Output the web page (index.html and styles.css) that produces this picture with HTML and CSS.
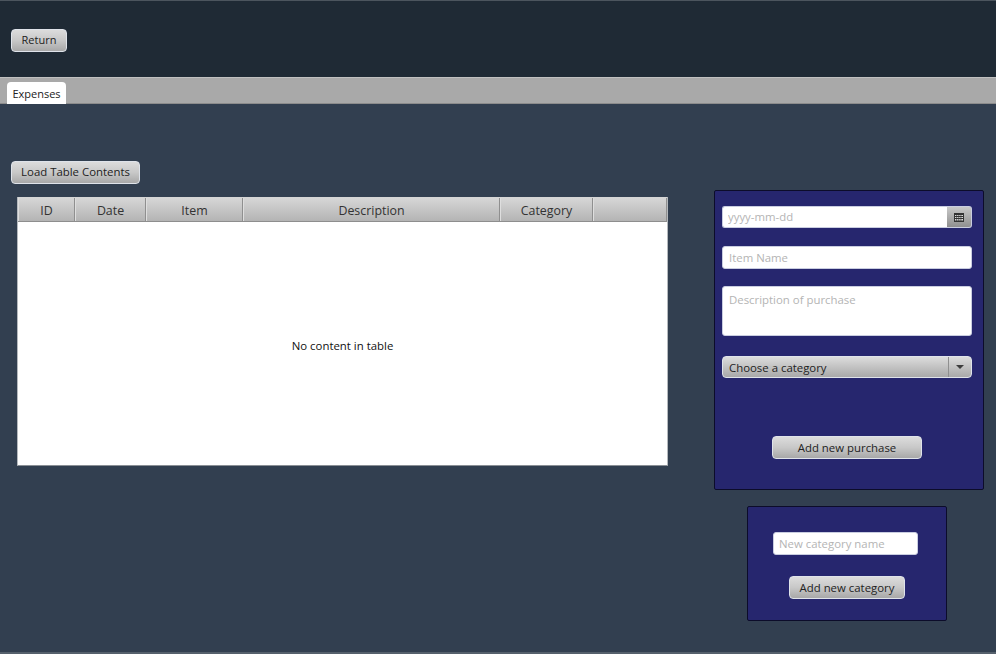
FILE: index.html
```html
<!DOCTYPE html>
<html lang="en">
<head>
    <meta charset="UTF-8">
    <title>Expenses</title>
    <link rel="stylesheet" href="styles.css">
</head>
<body>
    <div class="topbar">
        <button class="btn return-btn">Return</button>
    </div>
    <div class="tabbar">
        <div class="tab">Expenses</div>
    </div>
    <div class="content">
        <div class="left">
            <button class="btn load-btn">Load Table Contents</button>
            <div class="table">
                <div class="thead">
                    <div class="th col-id">ID</div>
                    <div class="th col-date">Date</div>
                    <div class="th col-item">Item</div>
                    <div class="th col-desc">Description</div>
                    <div class="th col-cat">Category</div>
                    <div class="th col-rest"></div>
                </div>
                <div class="tbody">No content in table</div>
            </div>
        </div>
        <div class="right">
            <div class="panel purchase-panel">
                <div class="date-field">
                    <input class="field date-input" type="text" placeholder="yyyy-mm-dd">
                    <div class="date-btn">
                        <svg width="10" height="9" viewBox="0 0 10 9">
                            <rect width="10" height="9" fill="#333"></rect>
                            <path d="M1 2h1.4v1H1zM3.1 2h1.4v1H3.1zM5.2 2h1.4v1H5.2zM7.3 2h1.7v1H7.3zM1 4h1.4v1H1zM3.1 4h1.4v1H3.1zM5.2 4h1.4v1H5.2zM7.3 4h1.7v1H7.3zM1 6h1.4v1.5H1zM3.1 6h1.4v1.5H3.1zM5.2 6h1.4v1.5H5.2zM7.3 6h1.7v1.5H7.3z" fill="#ddd"></path>
                        </svg>
                    </div>
                </div>
                <input class="field name-input" type="text" placeholder="Item Name">
                <textarea class="field desc-input" placeholder="Description of purchase"></textarea>
                <div class="combo">
                    <span class="combo-label">Choose a category</span>
                    <span class="combo-arrow"></span>
                </div>
                <button class="btn add-purchase-btn">Add new purchase</button>
            </div>
            <div class="panel category-panel">
                <input class="field category-input" type="text" placeholder="New category name">
                <button class="btn add-category-btn">Add new category</button>
            </div>
        </div>
    </div>
</body>
</html>
```

FILE: styles.css
```css
* {
    box-sizing: border-box;
}
html, body {
    margin: 0;
    padding: 0;
}
body {
    width: 996px;
    height: 654px;
    overflow: hidden;
    display: flex;
    flex-direction: column;
    font-family: "Open Sans", "Noto Sans", sans-serif;
    font-size: 11.4px;
    color: #222;
    background: #323f50;
    border-bottom: 2px solid #55606c;
}
.topbar {
    height: 77px;
    padding: 28px 0 0 11px;
    background: #1f2a35;
    border-top: 1px solid #4c555e;
}
.tabbar {
    height: 27px;
    padding: 4px 0 0 7px;
    background: #a9a9a9;
    border-top: 1px solid #c0c0c0;
    border-bottom: 1px solid #8c8c8c;
}
.tab {
    width: 59px;
    height: 22px;
    padding-top: 4px;
    font-size: 11px;
    text-align: center;
    background: #fff;
    border-radius: 4px 4px 0 0;
}
.btn {
    display: block;
    height: 23px;
    padding: 0;
    font-family: inherit;
    font-size: 11.4px;
    color: #222;
    background: linear-gradient(#dcdcdc 0%, #c8c8c8 50%, #a8a8a8 100%);
    border: 1px solid #dfe3ea;
    border-radius: 4px;
}
.return-btn {
    width: 56px;
    padding-bottom: 2px;
    font-size: 11px;
}
.content {
    flex: 1;
    display: flex;
    justify-content: space-between;
}
.left {
    padding: 57px 0 0 11px;
}
.load-btn {
    width: 129px;
    padding-bottom: 2px;
}
.table {
    width: 651px;
    height: 269px;
    margin: 13px 0 0 6px;
    display: flex;
    flex-direction: column;
    background: #fff;
    border-right: 1px solid #b5b9bd;
    border-bottom: 1px solid #8a8f95;
    border-left: 1px solid #b5b9bd;
}
.thead {
    height: 25px;
    display: flex;
    border-top: 1px solid #d5d5d5;
    border-bottom: 1px solid #8e8e8e;
    background: linear-gradient(#d6d6d6, #b4b4b4);
}
.th {
    font-size: 12.4px;
    line-height: 25px;
    text-align: center;
    color: #333;
    border-left: 1px solid #dedede;
    border-right: 1px solid #8f8f8f;
}
.col-id { width: 57px; }
.col-date { width: 71px; }
.col-item { width: 97px; }
.col-desc { width: 257px; }
.col-cat { width: 93px; }
.col-rest { flex: 1; }
.tbody {
    flex: 1;
    display: flex;
    align-items: center;
    justify-content: center;
    padding-top: 4px;
    color: #111;
}
.right {
    width: 282px;
    padding: 86px 12px 0 0;
    display: flex;
    flex-direction: column;
    align-items: flex-end;
}
.panel {
    background: #26266e;
    border: 1px solid #0c0c2a;
    border-radius: 2px;
}
.purchase-panel {
    width: 270px;
    height: 300px;
    padding: 15px 12px 0 7px;
}
.field {
    display: block;
    font-family: inherit;
    font-size: 11.4px;
    padding: 0 6px;
    color: #333;
    background: #fff;
    border: 1px solid #c9cde0;
    border-radius: 3px;
    outline: none;
    resize: none;
}
.field::placeholder {
    color: #b4b4b4;
    opacity: 1;
}
.date-field {
    display: flex;
    width: 250px;
    height: 22px;
}
.date-input {
    flex: 1;
    min-width: 0;
    padding-left: 5px;
    padding-bottom: 2px;
    border-radius: 3px 0 0 3px;
    border-right: 0;
}
.date-btn {
    width: 25px;
    display: flex;
    align-items: center;
    justify-content: center;
    background: linear-gradient(#c9c9c9, #8f8f8f);
    border: 1px solid #c9cde0;
    border-left: 0;
    border-radius: 0 3px 3px 0;
}
.name-input {
    width: 250px;
    height: 23px;
    margin-top: 18px;
}
.desc-input {
    width: 250px;
    height: 50px;
    margin-top: 17px;
    padding-top: 5px;
    line-height: 16px;
}
.combo {
    width: 250px;
    height: 22px;
    margin-top: 20px;
    display: flex;
    background: linear-gradient(#dcdcdc, #a9a9a9);
    border: 1px solid #dfe3ea;
    border-radius: 4px;
}
.combo-label {
    flex: 1;
    padding-left: 6px;
    line-height: 21px;
}
.combo-arrow {
    width: 23px;
    position: relative;
    border-left: 1px solid #8f8f8f;
}
.combo-arrow::after {
    content: "";
    position: absolute;
    left: 7px;
    top: 8px;
    border-left: 4px solid transparent;
    border-right: 4px solid transparent;
    border-top: 4px solid #3c3c3c;
}
.add-purchase-btn {
    width: 150px;
    margin: 58px 0 0 50px;
}
.category-panel {
    width: 200px;
    height: 115px;
    margin: 16px 37px 0 0;
    padding: 25px 0 0 25px;
}
.category-input {
    width: 145px;
    height: 23px;
    padding-left: 5px;
}
.add-category-btn {
    width: 116px;
    margin: 21px 0 0 16px;
}
```
